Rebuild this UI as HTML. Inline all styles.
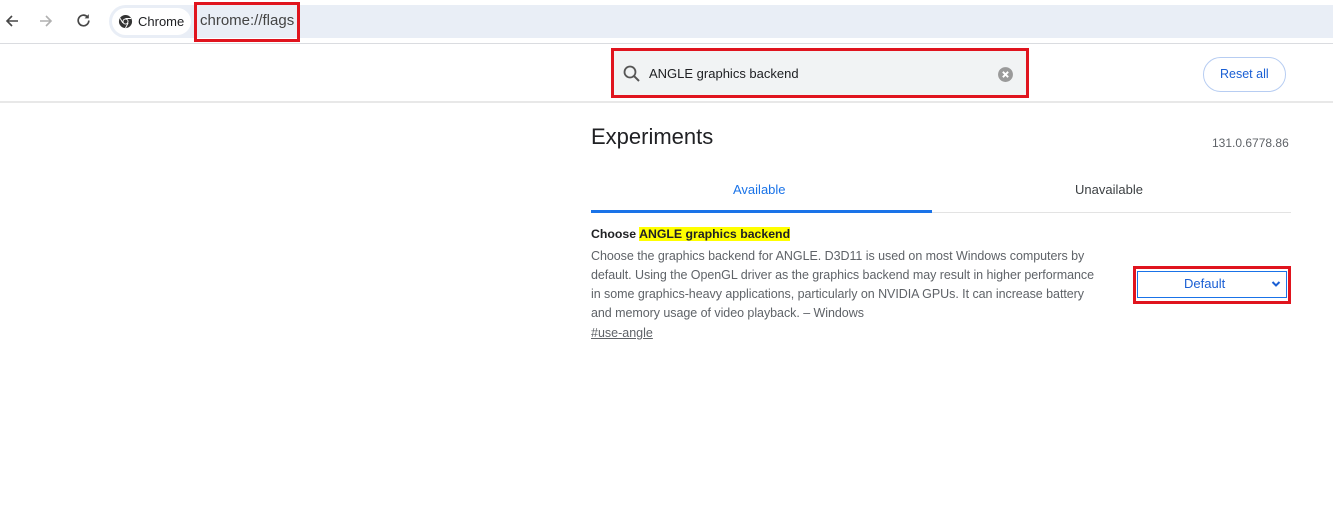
<!DOCTYPE html>
<html><head><style>
*{margin:0;padding:0;box-sizing:border-box}
body{width:1333px;height:515px;background:#fff;font-family:"Liberation Sans",sans-serif;position:relative;overflow:hidden;color:#202124}
.a{position:absolute}
.nw{white-space:nowrap}
</style></head><body>
<div class="a" style="left:0;top:0;width:1333px;height:44px;background:#fff;border-bottom:1px solid #dadce0"></div>
<svg class="a" style="left:4px;top:13px" width="16" height="16" viewBox="0 0 16 16"><path d="M14 8H3M8 3L3 8l5 5" stroke="#474747" stroke-width="1.6" fill="none"/></svg>
<svg class="a" style="left:38px;top:13px" width="16" height="16" viewBox="0 0 16 16"><path d="M2 8h11M8 3l5 5-5 5" stroke="#b0b0b0" stroke-width="1.6" fill="none"/></svg>
<svg class="a" style="left:75px;top:12px" width="17" height="17" viewBox="0 0 16 16"><path d="M13 8a5 5 0 1 1-1.5-3.6" stroke="#474747" stroke-width="1.6" fill="none"/><path d="M13 2v4H9z" fill="#474747"/></svg>
<div class="a" style="left:109px;top:5px;width:1240px;height:33px;background:#e9eef6;border-radius:17px"></div>
<div class="a" style="left:112px;top:8px;width:79px;height:27px;background:#fff;border-radius:14px"></div>
<svg class="a" style="left:118px;top:14px" width="15" height="15" viewBox="0 0 16 16"><circle cx="8" cy="8" r="7" fill="#333"/><circle cx="8" cy="8" r="3.2" fill="#fff"/><circle cx="8" cy="8" r="2.2" fill="#333"/><path d="M8 4.8h6M5.2 9.6L2.2 4.5M10.8 9.6L8 14.9" stroke="#fff" stroke-width="1"/></svg>
<div class="a nw" style="left:138px;top:14px;font-size:13px;color:#202124">Chrome</div>
<div class="a" style="left:194px;top:2px;width:106px;height:40px;border:3px solid #e0141e"></div>
<div class="a nw" style="left:200px;top:12px;font-size:15px;color:#444">chrome://flags</div>
<div class="a" style="left:0;top:101px;width:1333px;height:2px;background:#e8e8e8"></div>
<div class="a" style="left:611px;top:48px;width:418px;height:50px;border:3px solid #e0141e;background:#f1f3f4"></div>
<svg class="a" style="left:622px;top:64px" width="20" height="20" viewBox="0 0 20 20"><circle cx="8" cy="8" r="5.5" stroke="#555" stroke-width="1.8" fill="none"/><path d="M12 12l5 5" stroke="#555" stroke-width="2"/></svg>
<div class="a nw" style="left:649px;top:66px;font-size:13px;color:#202124">ANGLE graphics backend</div>
<svg class="a" style="left:997px;top:66px" width="17" height="17" viewBox="0 0 16 16"><circle cx="8" cy="8" r="7" fill="#9a9a9a"/><path d="M5.5 5.5l5 5M10.5 5.5l-5 5" stroke="#fff" stroke-width="1.8"/></svg>
<div class="a" style="left:1203px;top:57px;width:83px;height:35px;border:1px solid #b7cdf2;border-radius:18px"></div>
<div class="a nw" style="left:1220px;top:67px;font-size:12.5px;color:#1a5fd4">Reset all</div>
<div class="a nw" style="left:591px;top:124px;font-size:22px;color:#202124">Experiments</div>
<div class="a nw" style="left:1212px;top:136px;font-size:12px;color:#5f6368">131.0.6778.86</div>
<div class="a nw" style="left:733px;top:182px;font-size:13px;color:#1a73e8">Available</div>
<div class="a nw" style="left:1075px;top:182px;font-size:13px;color:#3c4043">Unavailable</div>
<div class="a" style="left:591px;top:212px;width:700px;height:1px;background:#e3e3e3"></div>
<div class="a" style="left:591px;top:210px;width:341px;height:3px;background:#1a73e8"></div>
<div class="a nw" style="left:591px;top:227px;font-size:12.3px;font-weight:bold;color:#202124">Choose <span style="background:#ffff00">ANGLE graphics backend</span></div>
<div class="a nw" style="left:591px;top:247px;font-size:12.5px;line-height:19px;color:#5f6368;letter-spacing:-0.05px">Choose the graphics backend for ANGLE. D3D11 is used on most Windows computers by<br>default. Using the OpenGL driver as the graphics backend may result in higher performance<br>in some graphics-heavy applications, particularly on NVIDIA GPUs. It can increase battery<br>and memory usage of video playback. – Windows</div>
<div class="a nw" style="left:591px;top:326px;font-size:12.5px;color:#5f6368;text-decoration:underline">#use-angle</div>
<div class="a" style="left:1133px;top:266px;width:158px;height:38px;border:3px solid #e0141e"></div>
<div class="a" style="left:1137px;top:271px;width:150px;height:27px;border:1px solid #1a73e8"></div>
<div class="a nw" style="left:1184px;top:276px;font-size:13px;color:#1a5fd4">Default</div>
<svg class="a" style="left:1271px;top:280px" width="10" height="8" viewBox="0 0 10 8"><path d="M1.5 2l3.5 3.5L8.5 2" stroke="#1a5fd4" stroke-width="2" fill="none"/></svg>
</body></html>
